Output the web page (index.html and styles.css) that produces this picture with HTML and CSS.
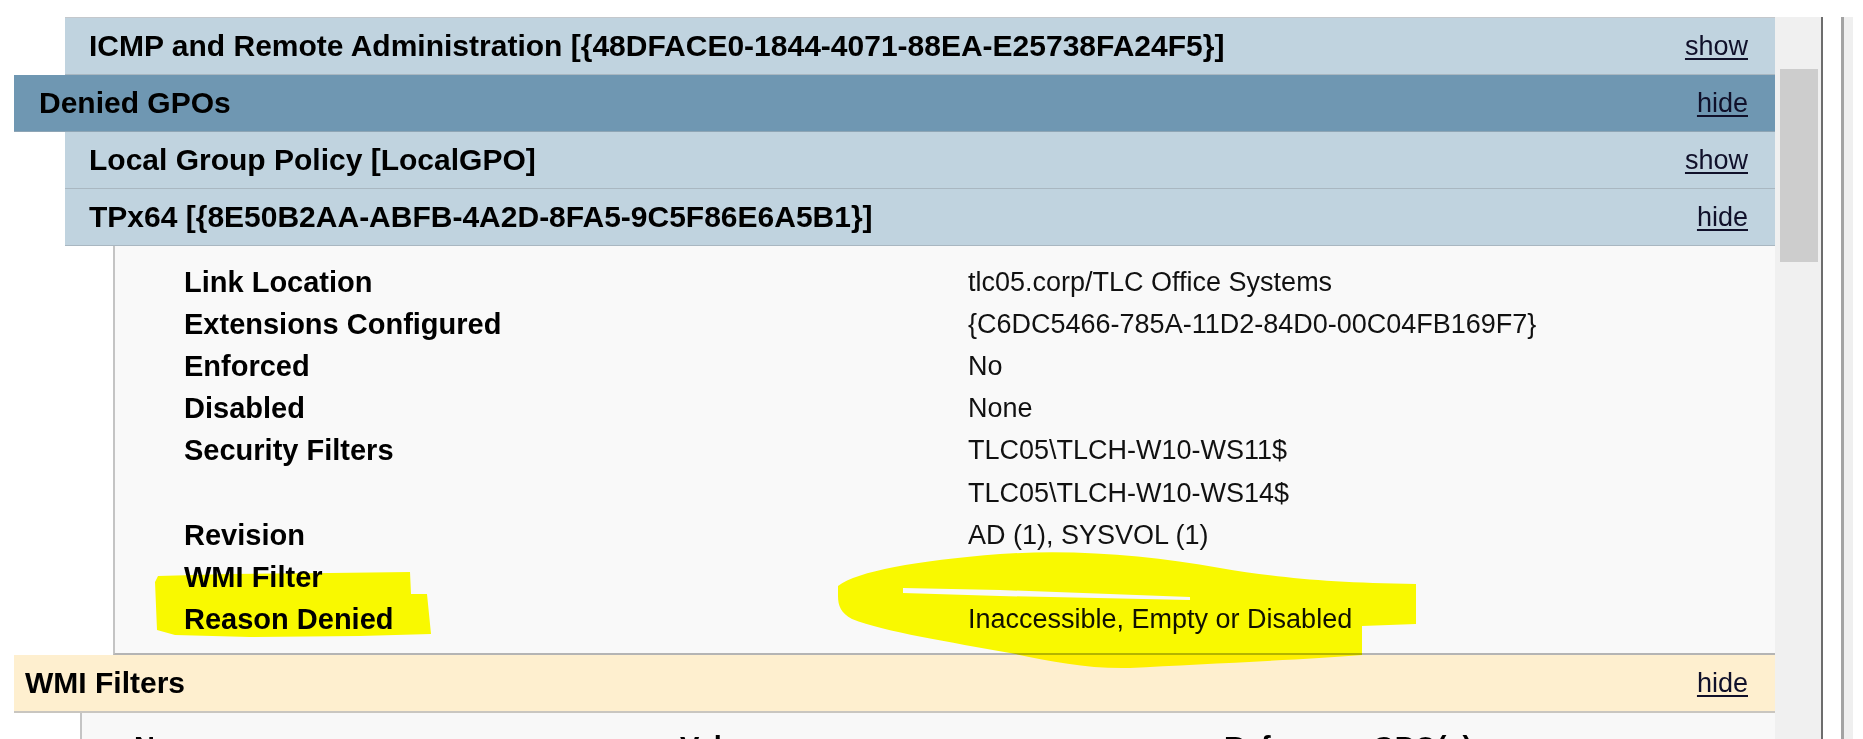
FILE: index.html
```html
<!DOCTYPE html>
<html>
<head>
<meta charset="utf-8">
<title>Group Policy Results</title>
<link rel="stylesheet" href="styles.css">
</head>
<body>
<div class="window">
  <div class="content">
    <div class="indent">
      <div class="bar bar-light bar-top">
        <span class="title">ICMP and Remote Administration [{48DFACE0-1844-4071-88EA-E25738FA24F5}]</span>
        <a class="toggle">show</a>
      </div>
    </div>
    <div class="bar bar-dark">
      <span class="title">Denied GPOs</span>
      <a class="toggle">hide</a>
    </div>
    <div class="indent">
      <div class="bar bar-light">
        <span class="title">Local Group Policy [LocalGPO]</span>
        <a class="toggle">show</a>
      </div>
      <div class="bar bar-light">
        <span class="title">TPx64 [{8E50B2AA-ABFB-4A2D-8FA5-9C5F86E6A5B1}]</span>
        <a class="toggle">hide</a>
      </div>
    </div>
    <div class="details">
      <div class="row"><span class="label">Link Location</span><span class="value">tlc05.corp/TLC Office Systems</span></div>
      <div class="row"><span class="label">Extensions Configured</span><span class="value">{C6DC5466-785A-11D2-84D0-00C04FB169F7}</span></div>
      <div class="row"><span class="label">Enforced</span><span class="value">No</span></div>
      <div class="row"><span class="label">Disabled</span><span class="value">None</span></div>
      <div class="row"><span class="label">Security Filters</span><span class="value">TLC05\TLCH-W10-WS11$</span></div>
      <div class="row"><span class="label"></span><span class="value">TLC05\TLCH-W10-WS14$</span></div>
      <div class="row"><span class="label">Revision</span><span class="value">AD (1), SYSVOL (1)</span></div>
      <div class="row"><span class="label">WMI Filter</span><span class="value"></span></div>
      <div class="row"><span class="label">Reason Denied</span><span class="value">Inaccessible, Empty or Disabled</span></div>
    </div>
    <div class="bar bar-cream">
      <span class="title">WMI Filters</span>
      <a class="toggle">hide</a>
    </div>
    <div class="wmi-body">
      <div class="thead">
        <span class="th">Name</span>
        <span class="th">Value</span>
        <span class="th">Reference GPO(s)</span>
      </div>
    </div>
  </div>
  <div class="scrollbar"><div class="thumb"></div></div>
  <div class="edge-dark"></div>
  <div class="edge-gap"></div>
  <div class="edge-gray"></div>
  <div class="edge-light"></div>
</div>
<svg class="marker" viewBox="0 0 1863 739" width="1863" height="739" xmlns="http://www.w3.org/2000/svg">
  <path d="M155,582 L158,576 L230,574 L330,573 L410,572 L411,594 L427,594 L431,634 L360,636 L250,637 L175,635 L157,630 Z" fill="#ffff00"/>
  <path fill="#ffff00" fill-rule="evenodd" d="M838,586 C858,571 915,561 1000,554 C1080,549 1150,556 1220,568 C1280,578 1330,583 1416,584 L1416,624 L1362,626 L1362,655 C1300,660 1200,664 1130,668 C1085,669 1050,661 1010,653 C950,642 885,632 852,619 C841,613 838,606 838,596 Z M903,588 L1000,590 L1190,597 L1190,600 L1000,596 L903,593 Z"/>
</svg>
</body>
</html>
```
FILE: styles.css
```css
html, body {
  margin: 0;
  padding: 0;
  background: #ffffff;
}
body {
  position: relative;
  width: 1863px;
  height: 739px;
  overflow: hidden;
  font-family: "Liberation Sans", Arial, sans-serif;
  color: #000000;
}
.window {
  display: flex;
  padding-top: 17px;
  height: 722px;
}
.content {
  width: 1775px;
  flex: none;
}
.indent {
  margin-left: 65px;
}
.bar {
  display: flex;
  justify-content: space-between;
  align-items: center;
  box-sizing: border-box;
  height: 57px;
  padding: 0 27px 0 24px;
  border-bottom: 1px solid #a9b7c1;
}
.bar-top {
  height: 58px;
  border-top: 1px solid #c4c8cc;
}
.bar-light {
  background: #c0d3df;
}
.bar-dark {
  margin-left: 14px;
  padding-left: 25px;
  background: #6f97b2;
  border-bottom-color: #8ea5b5;
}
.bar-cream {
  margin-left: 14px;
  padding-left: 11px;
  height: 58px;
  background: #feefcf;
  border-bottom: 2px solid #c9c6c0;
}
.title {
  font-weight: bold;
  font-size: 30px;
}
.toggle {
  font-size: 27px;
  color: #10102a;
  text-decoration: underline;
  text-underline-offset: 3px;
}
.details {
  margin-left: 113px;
  box-sizing: border-box;
  height: 409px;
  padding: 15px 0 0 69px;
  background: #f9f9f9;
  border-left: 2px solid #c4c4c4;
  border-bottom: 2px solid #b4b4b4;
}
.row {
  display: grid;
  grid-template-columns: 784px 1fr;
  height: 42.2px;
  align-items: center;
}
.label {
  font-weight: bold;
  font-size: 29px;
}
.value {
  font-size: 27px;
  color: #111111;
}
.wmi-body {
  margin-left: 80px;
  height: 40px;
  background: #f8f8f8;
  border-left: 2px solid #c4c4c4;
  padding-left: 52px;
}
.thead {
  display: grid;
  grid-template-columns: 546px 544px 1fr;
  padding-top: 13px;
}
.th {
  font-weight: bold;
  font-size: 29px;
  line-height: 42px;
}
.scrollbar {
  width: 46px;
  flex: none;
  background: #f0f0f0;
  box-sizing: border-box;
  padding: 52px 3px 0 5px;
}
.thumb {
  height: 193px;
  background: #cdcdcd;
}
.edge-dark {
  width: 2px;
  flex: none;
  background: #6d6d6d;
}
.edge-gap {
  width: 18px;
  flex: none;
  background: #ffffff;
}
.edge-gray {
  width: 3px;
  flex: none;
  background: #a3a3a3;
}
.edge-light {
  width: 9px;
  flex: none;
  background: #efefef;
}
.marker {
  position: absolute;
  top: 0;
  left: 0;
  pointer-events: none;
  mix-blend-mode: multiply;
}
```
